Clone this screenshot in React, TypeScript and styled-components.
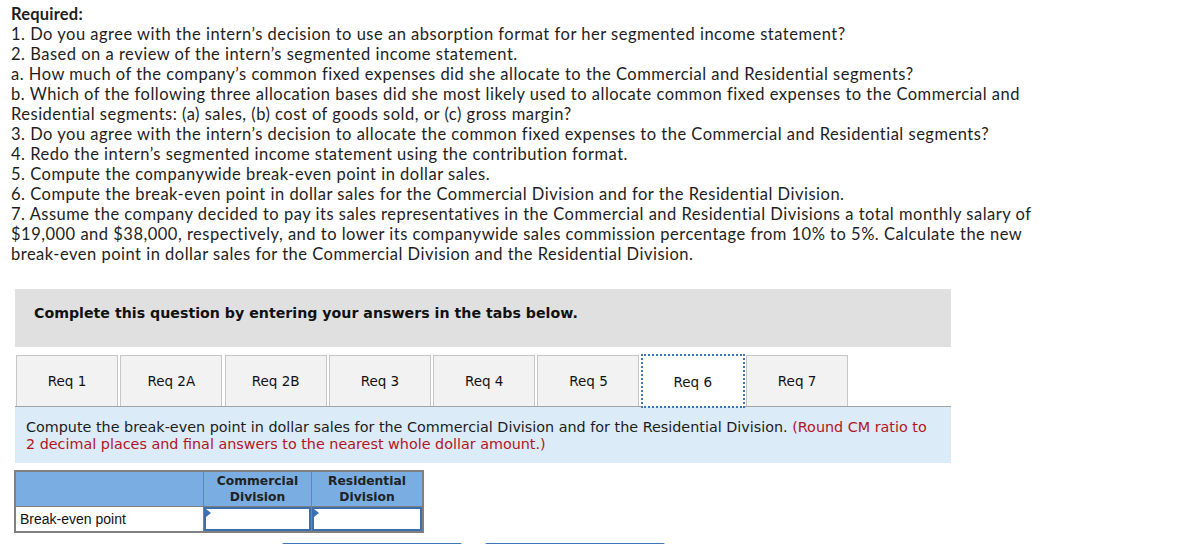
import React from "react";
import styled, { createGlobalStyle } from "styled-components";

const Global = createGlobalStyle`
  html, body { margin: 0; padding: 0; background: #fff; }
  body { overflow: hidden; }
`;

const Page = styled.div`
  height: 544px;
  overflow: hidden;
  padding-top: 4px;
  box-sizing: border-box;
`;

const Required = styled.div`
  padding-left: 11px;
  font-family: Lato, "Liberation Sans", sans-serif;
  font-size: 16.5px;
  letter-spacing: 0.5px;
  line-height: 20px;
  color: #1e1e1e;
  white-space: nowrap;
`;

const Heading = styled.div`
  font-weight: 700;
  letter-spacing: 0.2px;
`;

const Line = styled.div``;

const Panel = styled.div`
  margin: 25px 0 0 15px;
  width: 936px;
  font-family: "DejaVu Sans", Verdana, sans-serif;
`;

const Instruction = styled.div`
  background: #e0e0e0;
  height: 58px;
  box-sizing: border-box;
  padding: 15px 0 0 19px;
  font-size: 14.2px;
  line-height: 18px;
  font-weight: 700;
  color: #111;
`;

const TabBar = styled.div`
  margin-top: 8px;
  display: flex;
  gap: 2.3px;
  padding-left: 1px;
  border-bottom: 1px solid #a3a3a3;
`;

const Tab = styled.div<{ $active?: boolean }>`
  width: 102px;
  height: 51px;
  box-sizing: border-box;
  display: flex;
  align-items: center;
  justify-content: center;
  font-size: 13.5px;
  color: #111;
  background: ${(p) => (p.$active ? "#fff" : "#f2f2f2")};
  border: 1px solid ${(p) => (p.$active ? "transparent" : "#c6c6c6")};
  border-bottom: none;
  outline: ${(p) => (p.$active ? "2px dotted #3f74b8" : "none")};
  outline-offset: -1px;
  ${(p) => (p.$active ? "margin-bottom: -1px; height: 52px;" : "")}
`;

const Info = styled.div`
  background: #dbebf8;
  padding: 12px 8px 10px 11px;
  font-size: 14.35px;
  line-height: 17px;
  color: #1c1c1c;
  white-space: nowrap;
`;

const Note = styled.span`
  color: #b3151d;
`;

const Grid = styled.table`
  margin-top: 7px;
  margin-left: -1px;
  border-collapse: collapse;
  border: 2px solid #808080;
`;

const HeadCell = styled.th<{ $w: number }>`
  width: ${(p) => p.$w}px;
  height: 34px;
  padding: 0;
  background: #7aaee3;
  border: 1px solid #808080;
  font-family: "DejaVu Sans", Verdana, sans-serif;
  font-size: 12.3px;
  line-height: 16px;
  font-weight: 700;
  color: #222;
  text-align: center;
  vertical-align: middle;
`;

const LabelCell = styled.td`
  height: 24px;
  padding: 0 0 0 4px;
  border: 1px solid #808080;
  font-family: "Liberation Sans", Arial, sans-serif;
  font-size: 14px;
  color: #111;
`;

const InputCell = styled.td`
  padding: 0;
  border: 1px solid #808080;
`;

const Field = styled.div`
  height: 24px;
  box-sizing: border-box;
  border: 2px solid #3e6eab;
  background: #fff;
  position: relative;
`;

const Marker = styled.span`
  position: absolute;
  left: 0;
  top: 0;
  width: 0;
  height: 0;
  border-top: 4px solid transparent;
  border-bottom: 4px solid transparent;
  border-left: 5px solid #3a72b8;
`;

const Nav = styled.div`
  margin: 10px 0 0 267px;
  display: flex;
  gap: 23px;
`;

const NavButton = styled.div`
  width: 180px;
  height: 36px;
  box-sizing: border-box;
  border: 2px solid #3f78b8;
  border-radius: 2px;
`;

const tabs = ["Req 1", "Req 2A", "Req 2B", "Req 3", "Req 4", "Req 5", "Req 6", "Req 7"];

export default function App() {
  return (
    <Page>
      <Global />
      <Required>
        <Heading>Required:</Heading>
        <Line>1. Do you agree with the intern’s decision to use an absorption format for her segmented income statement?</Line>
        <Line>2. Based on a review of the intern’s segmented income statement.</Line>
        <Line>a. How much of the company’s common fixed expenses did she allocate to the Commercial and Residential segments?</Line>
        <Line>b. Which of the following three allocation bases did she most likely used to allocate common fixed expenses to the Commercial and</Line>
        <Line>Residential segments: (a) sales, (b) cost of goods sold, or (c) gross margin?</Line>
        <Line>3. Do you agree with the intern’s decision to allocate the common fixed expenses to the Commercial and Residential segments?</Line>
        <Line>4. Redo the intern’s segmented income statement using the contribution format.</Line>
        <Line>5. Compute the companywide break-even point in dollar sales.</Line>
        <Line>6. Compute the break-even point in dollar sales for the Commercial Division and for the Residential Division.</Line>
        <Line>7. Assume the company decided to pay its sales representatives in the Commercial and Residential Divisions a total monthly salary of</Line>
        <Line>$19,000 and $38,000, respectively, and to lower its companywide sales commission percentage from 10% to 5%. Calculate the new</Line>
        <Line>break-even point in dollar sales for the Commercial Division and the Residential Division.</Line>
      </Required>
      <Panel>
        <Instruction>Complete this question by entering your answers in the tabs below.</Instruction>
        <TabBar>
          {tabs.map((t) => (
            <Tab key={t} $active={t === "Req 6"}>{t}</Tab>
          ))}
        </TabBar>
        <Info>
          Compute the break-even point in dollar sales for the Commercial Division and for the Residential Division.{" "}
          <Note>(Round CM ratio to</Note>
          <br />
          <Note>2 decimal places and final answers to the nearest whole dollar amount.)</Note>
        </Info>
        <Grid>
          <thead>
            <tr>
              <HeadCell $w={187} />
              <HeadCell $w={107}>Commercial<br />Division</HeadCell>
              <HeadCell $w={110}>Residential<br />Division</HeadCell>
            </tr>
          </thead>
          <tbody>
            <tr>
              <LabelCell>Break-even point</LabelCell>
              <InputCell><Field><Marker /></Field></InputCell>
              <InputCell><Field><Marker /></Field></InputCell>
            </tr>
          </tbody>
        </Grid>
        <Nav>
          <NavButton />
          <NavButton />
        </Nav>
      </Panel>
    </Page>
  );
}
